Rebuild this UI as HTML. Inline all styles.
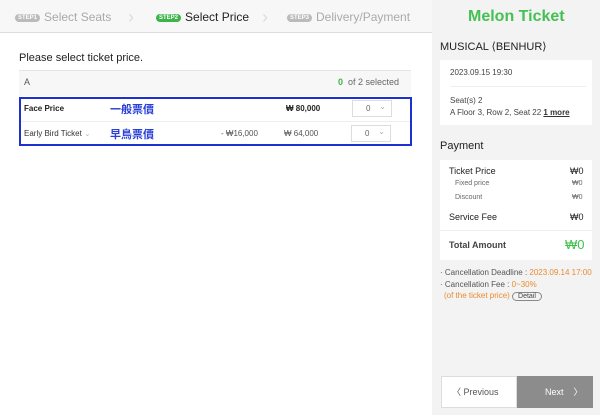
<!DOCTYPE html>
<html><head><meta charset="utf-8"><style>
*{margin:0;padding:0;box-sizing:border-box}
body{width:600px;height:415px;overflow:hidden;background:#fff;font-family:"Liberation Sans","Noto Sans CJK TC",sans-serif;position:relative;color:#333}
.a{position:absolute;white-space:nowrap}
.step{background:#bbb;color:#fff;font-size:6px;font-weight:bold;border-radius:6px;padding:1px 3px;display:inline-block;vertical-align:middle;margin-right:4px}
.sel{border:1px solid #ddd;background:#fff;font-size:8px;color:#666;width:40px;height:17px;line-height:15px;padding-left:14px}
.sel:after{content:"⌄";position:absolute;right:5px;top:-2px;color:#aaa}
</style></head><body>
<div class="a" style="left:0;top:0;width:432px;height:33px;background:#f7f7f7;border-bottom:1px solid #ddd"></div>
<div class="a" style="left:15px;top:10px;font-size:12px;color:#aaa"><span class="step">STEP1</span>Select Seats</div>
<div class="a" style="left:128px;top:7px;font-size:18px;color:#ddd">›</div>
<div class="a" style="left:156px;top:10px;font-size:12px;color:#222"><span class="step" style="background:#3cb44a">STEP2</span>Select Price</div>
<div class="a" style="left:262px;top:7px;font-size:18px;color:#ddd">›</div>
<div class="a" style="left:287px;top:10px;font-size:12px;color:#aaa"><span class="step">STEP3</span>Delivery/Payment</div>

<div class="a" style="left:19px;top:52px;font-size:11px;color:#222">Please select ticket price.</div>
<div class="a" style="left:19px;top:70px;width:392px;height:26px;background:#f7f7f7;border-top:1px solid #e5e5e5"></div>
<div class="a" style="left:24px;top:77px;font-size:9px;color:#555">A</div>
<div class="a" style="left:338px;top:77px;font-size:9px;color:#666"><span style="color:#3cb44a;font-weight:bold">0</span>&nbsp; of 2 selected</div>
<div class="a" style="left:19px;top:97px;width:393px;height:49px;border:2px solid #1e2fd4"></div>
<div class="a" style="left:21px;top:121px;width:389px;border-top:1px solid #eee"></div>
<div class="a" style="left:24px;top:104px;font-size:8px;font-weight:bold;color:#222">Face Price</div>
<div class="a" style="left:110px;top:101px;font-size:11px;font-weight:bold;color:#2a3fd8">一般票價</div>
<div class="a" style="left:286px;top:104px;font-size:8px;font-weight:bold;color:#222">₩ 80,000</div>
<div class="a sel" style="left:352px;top:100px"></div><div class="a" style="left:366px;top:104px;font-size:8px;color:#666">0</div>
<div class="a" style="left:24px;top:129px;font-size:8px;color:#333">Early Bird Ticket <span style="color:#bbb">⌄</span></div>
<div class="a" style="left:110px;top:126px;font-size:11px;font-weight:bold;color:#2a3fd8">早鳥票價</div>
<div class="a" style="left:221px;top:129px;font-size:8px;color:#555">- ₩16,000</div>
<div class="a" style="left:284px;top:129px;font-size:8px;color:#555">₩ 64,000</div>
<div class="a sel" style="left:351px;top:125px"></div><div class="a" style="left:365px;top:129px;font-size:8px;color:#666">0</div>

<div class="a" style="left:432px;top:0;width:168px;height:415px;background:#f3f3f3"></div>
<div class="a" style="left:468px;top:8px;font-size:16px;font-weight:bold;color:#45c052">Melon Ticket</div>
<div class="a" style="left:440px;top:40px;font-size:11px;color:#222">MUSICAL ⟨BENHUR⟩</div>
<div class="a" style="left:440px;top:60px;width:152px;height:65px;background:#fff"></div>
<div class="a" style="left:450px;top:68px;font-size:8px;color:#444">2023.09.15 19:30</div>
<div class="a" style="left:450px;top:86px;width:136px;border-top:1px solid #eee"></div>
<div class="a" style="left:450px;top:96px;font-size:8px;color:#444">Seat(s) 2</div>
<div class="a" style="left:450px;top:108px;font-size:8px;color:#444">A Floor 3, Row 2, Seat 22 <b style="text-decoration:underline;color:#333">1 more</b></div>
<div class="a" style="left:440px;top:140px;font-size:11px;color:#222">Payment</div>
<div class="a" style="left:440px;top:160px;width:152px;height:100px;background:#fff"></div>
<div class="a" style="left:449px;top:166px;font-size:9px;color:#222">Ticket Price</div><div class="a" style="left:570px;top:166px;font-size:9px;color:#222">₩0</div>
<div class="a" style="left:455px;top:180px;font-size:7px;color:#666">Fixed price</div><div class="a" style="left:572px;top:180px;font-size:7px;color:#666">₩0</div>
<div class="a" style="left:455px;top:194px;font-size:7px;color:#666">Discount</div><div class="a" style="left:572px;top:194px;font-size:7px;color:#666">₩0</div>
<div class="a" style="left:449px;top:212px;font-size:9px;color:#222">Service Fee</div><div class="a" style="left:570px;top:212px;font-size:9px;color:#222">₩0</div>
<div class="a" style="left:440px;top:230px;width:152px;border-top:1px solid #eee"></div>
<div class="a" style="left:449px;top:240px;font-size:9px;font-weight:bold;color:#444">Total Amount</div><div class="a" style="left:565px;top:237px;font-size:13px;color:#3fbf4c">₩0</div>
<div class="a" style="left:440px;top:268px;font-size:8px;color:#555">· Cancellation Deadline : <span style="color:#e88b2e">2023.09.14 17:00</span></div>
<div class="a" style="left:440px;top:280px;font-size:8px;color:#555">· Cancellation Fee : <span style="color:#e88b2e">0~30%</span></div>
<div class="a" style="left:444px;top:291px;font-size:8px;color:#e88b2e">(of the ticket price) <span style="display:inline-block;border:1px solid #888;border-radius:7px;padding:0 5px;color:#444;font-size:7px">Detail</span></div>
<div class="a" style="left:441px;top:376px;width:76px;height:32px;background:#fff;border:1px solid #ddd;font-size:9px;color:#555;line-height:30px;padding-left:10px">〈 Previous</div>
<div class="a" style="left:517px;top:376px;width:76px;height:32px;background:#8c8c8c;font-size:9px;color:#fff;line-height:32px;padding-left:28px">Next &nbsp;&nbsp;&nbsp;〉</div>
</body></html>
